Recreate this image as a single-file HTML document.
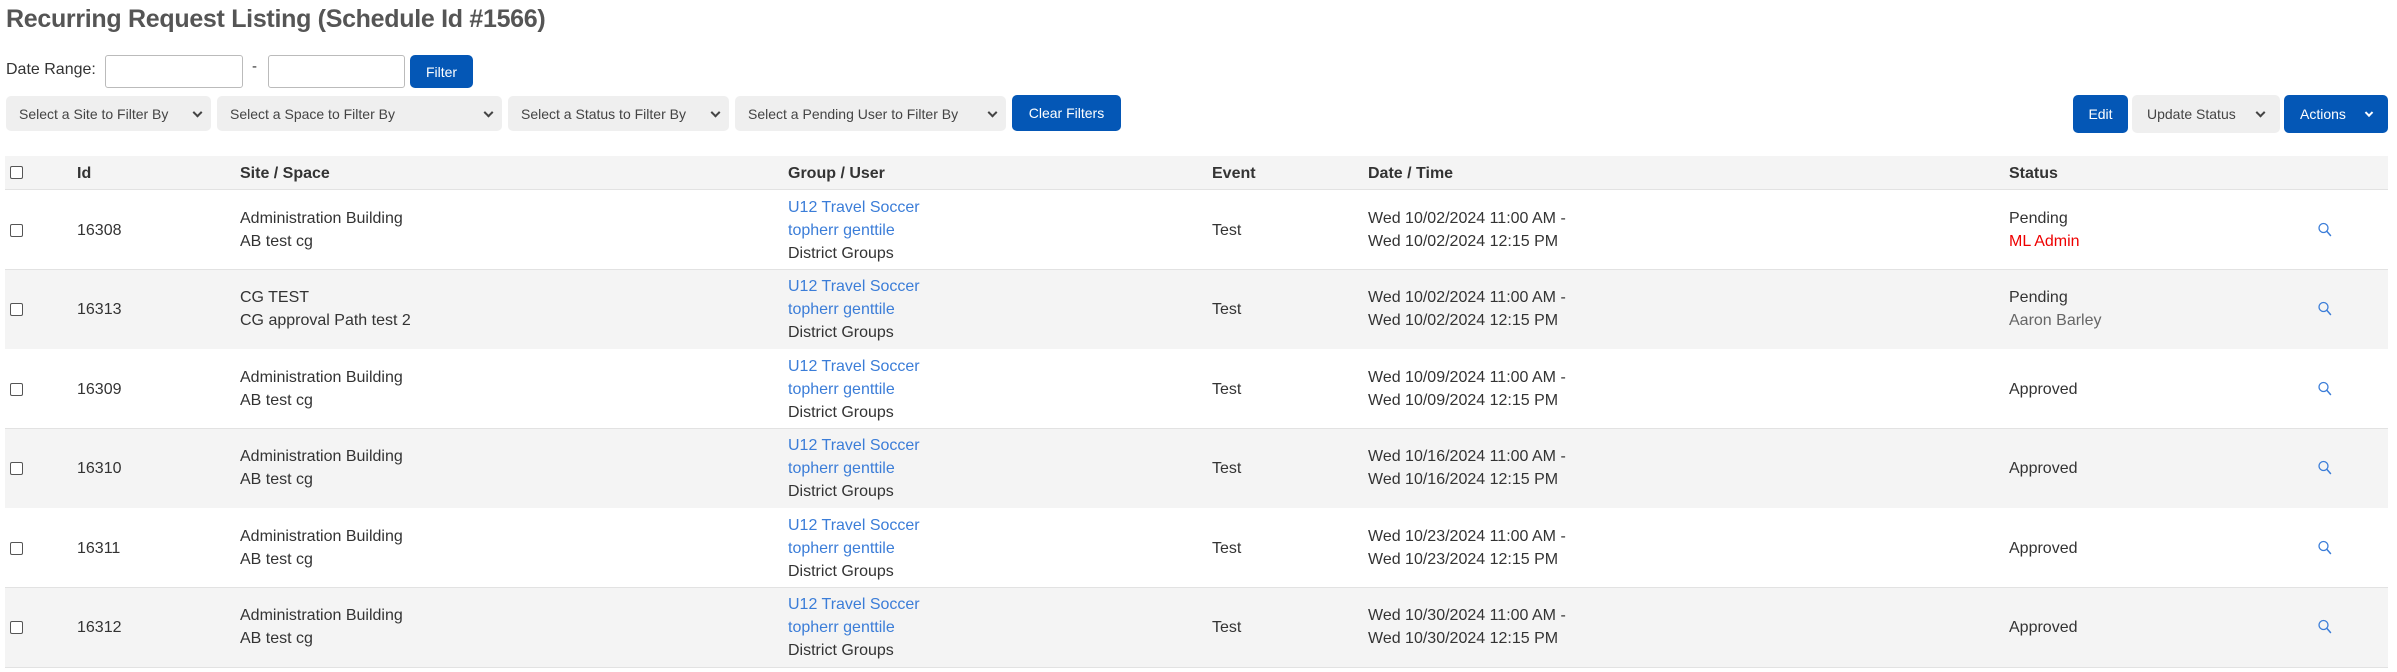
<!DOCTYPE html>
<html><head><meta charset="utf-8"><style>
*{box-sizing:border-box;margin:0;padding:0}
body{width:2397px;height:672px;background:#fff;font-family:"Liberation Sans",sans-serif;color:#333;position:relative;overflow:hidden}
.a{position:absolute;white-space:nowrap}
h1{position:absolute;left:6px;top:5px;font-size:25px;font-weight:bold;color:#555;letter-spacing:-0.3px}
.inp{position:absolute;border:1px solid #bbb;border-radius:3px;background:#fff}
.btn{position:absolute;background:#0457b6;color:#fff;border-radius:5px;font-size:14px;display:flex;align-items:center;justify-content:center}
.sel{position:absolute;background:#efefef;border-radius:5px;font-size:14px;color:#444;display:flex;align-items:center;padding-left:13px}
.sel .c,.btn .c{position:absolute;right:10px;top:50%;width:7px;height:7px;border-right:2px solid #444;border-bottom:2px solid #444;transform:translateY(-70%) rotate(45deg)}
.btn .c{border-color:#fff;right:16px;width:6px;height:6px}
.row{position:absolute;left:5px;width:2383px;border-bottom:1px solid #e2e2e2}
.hd{font-weight:bold;font-size:16px}
.t{position:absolute;font-size:16px;line-height:23px;white-space:nowrap}
.cb{position:absolute;left:10px;width:13px;height:13px;border:1px solid #555;border-radius:2px;background:#fff}
.lk{color:#3b7dd8}
</style></head><body>
<h1>Recurring Request Listing (Schedule Id #1566)</h1>
<div class="a" style="left:6px;top:61px;font-size:16px">Date Range:</div>
<div class="inp" style="left:105px;top:55px;width:138px;height:33px"></div>
<div class="a" style="left:252px;top:58px;font-size:15px">-</div>
<div class="inp" style="left:268px;top:55px;width:137px;height:33px"></div>
<div class="btn" style="left:410px;top:55px;width:63px;height:33px">Filter</div>
<div class="sel" style="left:6px;top:96px;width:205px;height:35px">Select a Site to Filter By<span class="c"></span></div>
<div class="sel" style="left:217px;top:96px;width:285px;height:35px">Select a Space to Filter By<span class="c"></span></div>
<div class="sel" style="left:508px;top:96px;width:221px;height:35px">Select a Status to Filter By<span class="c"></span></div>
<div class="sel" style="left:735px;top:96px;width:271px;height:35px">Select a Pending User to Filter By<span class="c"></span></div>
<div class="btn" style="left:1012px;top:95px;width:109px;height:36px">Clear Filters</div>
<div class="btn" style="left:2073px;top:95px;width:55px;height:38px">Edit</div>
<div class="sel" style="left:2132px;top:95px;width:148px;height:38px;padding-left:15px">Update Status<span class="c" style="right:16px"></span></div>
<div class="btn" style="left:2284px;top:95px;width:104px;height:38px;justify-content:flex-start;padding-left:16px">Actions<span class="c"></span></div>

<div class="row" style="top:156px;height:34px;background:#f4f4f4"></div>
<div class="cb" style="top:166px"></div>
<div class="t hd" style="left:77px;top:162px">Id</div>
<div class="t hd" style="left:240px;top:162px">Site / Space</div>
<div class="t hd" style="left:788px;top:162px">Group / User</div>
<div class="t hd" style="left:1212px;top:162px">Event</div>
<div class="t hd" style="left:1368px;top:162px">Date / Time</div>
<div class="t hd" style="left:2009px;top:162px">Status</div>

<div id="rows"></div>
<script>
var d=[["16308","Administration Building","AB test cg","10/02/2024","Pending",'<span style="color:#e00">ML Admin</span>'],
["16313","CG TEST","CG approval Path test 2","10/02/2024","Pending",'<span style="color:#666">Aaron Barley</span>'],
["16309","Administration Building","AB test cg","10/09/2024","Approved",""],
["16310","Administration Building","AB test cg","10/16/2024","Approved",""],
["16311","Administration Building","AB test cg","10/23/2024","Approved",""],
["16312","Administration Building","AB test cg","10/30/2024","Approved",""]];
var h="";
d.forEach(function(r,i){var top=190+i*79.5,m=top+39.5;
h+='<div class="row" style="top:'+top+'px;height:80px;background:'+(i%2?'#f4f4f4':'#fff')+'"></div>';
h+='<div class="cb" style="top:'+(m-6)+'px"></div>';
h+='<div class="t" style="left:77px;top:'+(m-11)+'px">'+r[0]+'</div>';
h+='<div class="t" style="left:240px;top:'+(m-23)+'px">'+r[1]+'<br>'+r[2]+'</div>';
h+='<div class="t" style="left:788px;top:'+(m-34)+'px"><span class="lk">U12 Travel Soccer</span><br><span class="lk">topherr genttile</span><br>District Groups</div>';
h+='<div class="t" style="left:1212px;top:'+(m-11)+'px">Test</div>';
h+='<div class="t" style="left:1368px;top:'+(m-23)+'px">Wed '+r[3]+' 11:00 AM -<br>Wed '+r[3]+' 12:15 PM</div>';
h+='<div class="t" style="left:2009px;top:'+(r[5]?m-23:m-11)+'px">'+r[4]+(r[5]?'<br>'+r[5]:'')+'</div>';
h+='<svg class="a" style="left:2317px;top:'+(m-8)+'px" width="16" height="16" viewBox="0 0 16 16"><circle cx="6.5" cy="6" r="4.5" fill="none" stroke="#3b7dd8" stroke-width="1.3"/><line x1="9.8" y1="9.3" x2="13.5" y2="13.5" stroke="#3b7dd8" stroke-width="1.5" stroke-linecap="round"/></svg>';
});
document.getElementById("rows").innerHTML=h;
</script>
</body></html>
